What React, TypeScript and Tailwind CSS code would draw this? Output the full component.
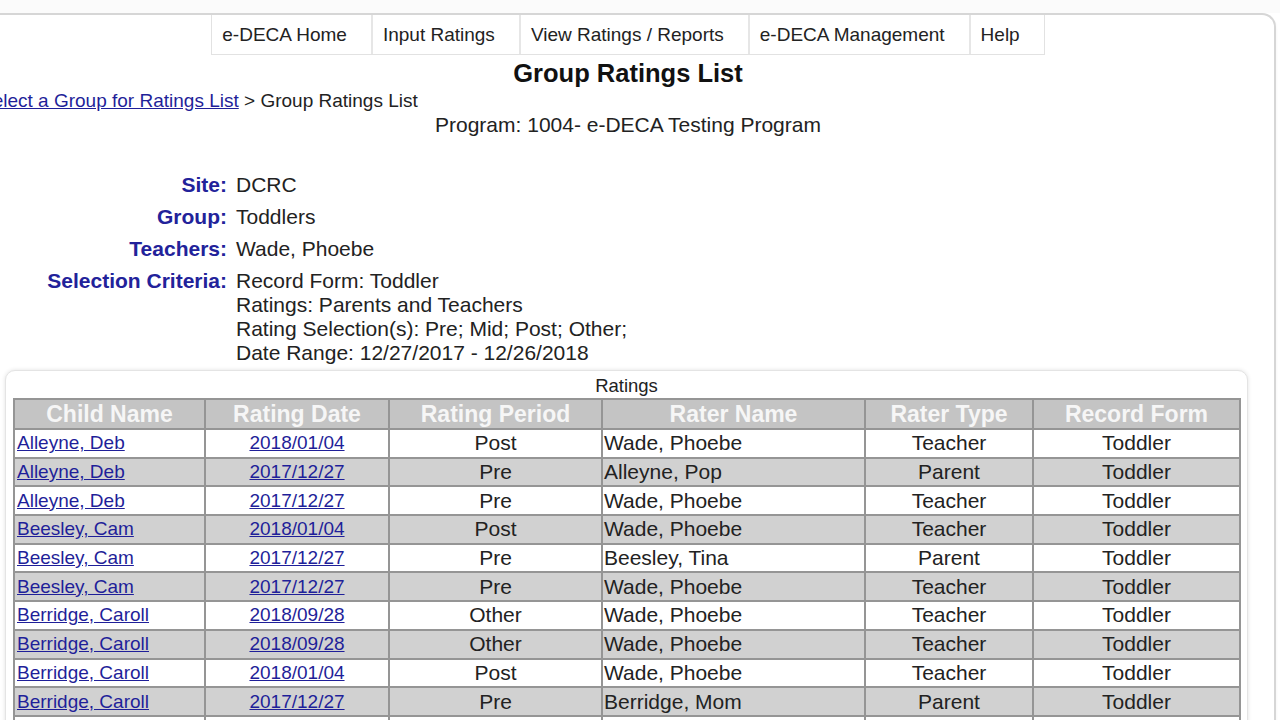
const navItems = ['e-DECA Home', 'Input Ratings', 'View Ratings / Reports', 'e-DECA Management', 'Help'];

const columns = ['Child Name', 'Rating Date', 'Rating Period', 'Rater Name', 'Rater Type', 'Record Form'];

const rows = [
  ['Alleyne, Deb', '2018/01/04', 'Post', 'Wade, Phoebe', 'Teacher', 'Toddler'],
  ['Alleyne, Deb', '2017/12/27', 'Pre', 'Alleyne, Pop', 'Parent', 'Toddler'],
  ['Alleyne, Deb', '2017/12/27', 'Pre', 'Wade, Phoebe', 'Teacher', 'Toddler'],
  ['Beesley, Cam', '2018/01/04', 'Post', 'Wade, Phoebe', 'Teacher', 'Toddler'],
  ['Beesley, Cam', '2017/12/27', 'Pre', 'Beesley, Tina', 'Parent', 'Toddler'],
  ['Beesley, Cam', '2017/12/27', 'Pre', 'Wade, Phoebe', 'Teacher', 'Toddler'],
  ['Berridge, Caroll', '2018/09/28', 'Other', 'Wade, Phoebe', 'Teacher', 'Toddler'],
  ['Berridge, Caroll', '2018/09/28', 'Other', 'Wade, Phoebe', 'Teacher', 'Toddler'],
  ['Berridge, Caroll', '2018/01/04', 'Post', 'Wade, Phoebe', 'Teacher', 'Toddler'],
  ['Berridge, Caroll', '2017/12/27', 'Pre', 'Berridge, Mom', 'Parent', 'Toddler'],
  ['Berridge, Caroll', '2017/12/27', 'Pre', 'Wade, Phoebe', 'Teacher', 'Toddler'],
];

const colWidths = ['w-[191px]', 'w-[184px]', 'w-[213px]', 'w-[263px]', 'w-[168px]', 'w-[207px]'];

function InfoRow({ label, children }: { label: string; children: React.ReactNode }) {
  return (
    <>
      <div className="text-right font-bold text-[#22229a]">{label}</div>
      <div>{children}</div>
    </>
  );
}

export default function App() {
  return (
    <div className="min-h-[720px] bg-white overflow-hidden text-[#222] font-['Liberation_Sans',Arial,sans-serif]">
      <div className="h-[13px] bg-[#fbfbfb]" />
      <div className="w-[1276px] border-t-[2px] border-r-[2px] border-[#d6d6d6] rounded-tr-[14px] shadow-[0_2px_3px_rgba(0,0,0,0.06)]">
        <div className="w-[1256px]">
          {/* Top navigation */}
          <div className="flex justify-center">
            <div className="flex h-[40px] border border-t-0 border-[#e2e2e2]">
              {navItems.map((item, i) => (
                <div
                  key={item}
                  className={`flex items-center pt-[2px] pl-[10px] pr-[24px] text-[19px] text-[#222] ${i > 0 ? 'border-l-2 border-[#e6e6e6]' : ''}`}
                >
                  {item}
                </div>
              ))}
            </div>
          </div>

          {/* Title */}
          <h1 className="mt-[2px] h-[32px] text-center text-[25.5px] font-bold leading-[32px] text-[#111]">
            Group Ratings List
          </h1>

          {/* Breadcrumb */}
          <div className="-ml-[20px] h-[24px] text-[19px] leading-[24px] text-[#222]">
            <a href="#" className="text-[#1f1f99] underline">Select a Group for Ratings List</a>
            {' > Group Ratings List'}
          </div>

          <div className="h-[24px] text-center text-[21px] leading-[24px]">
            Program: 1004- e-DECA Testing Program
          </div>

          {/* Info section */}
          <div className="mt-[36px] grid grid-cols-[227px_auto] gap-x-[9px] gap-y-[8px] text-[21px] leading-[24px]">
            <InfoRow label="Site:">DCRC</InfoRow>
            <InfoRow label="Group:">Toddlers</InfoRow>
            <InfoRow label="Teachers:">Wade, Phoebe</InfoRow>
            <InfoRow label="Selection Criteria:">
              <div>Record Form: Toddler</div>
              <div>Ratings: Parents and Teachers</div>
              <div>Rating Selection(s): Pre; Mid; Post; Other;</div>
              <div>Date Range: 12/27/2017 - 12/26/2018</div>
            </InfoRow>
          </div>

          {/* Ratings table */}
          <div className="ml-[5px] mt-[5px] w-[1243px] rounded-[10px] border border-[#e4e4e4] bg-white px-[7px] pt-[2px] pb-4 shadow-[0_0_4px_rgba(0,0,0,0.12)]">
            <div className="h-[25px] text-center text-[18.5px] leading-[25px]">Ratings</div>
            <table className="w-[1226px] table-fixed border-collapse text-[21px]">
              <thead>
                <tr className="h-[30px] bg-[#c4c4c4]">
                  {columns.map((c, i) => (
                    <th key={c} className={`${colWidths[i]} border-2 border-[#959595] p-0 text-center text-[23px] font-bold leading-[25px] text-[#f6f6f6]`}>
                      {c}
                    </th>
                  ))}
                </tr>
              </thead>
              <tbody>
                {rows.map((r, i) => (
                  <tr key={i} className={`h-[28.7px] ${i % 2 === 1 ? 'bg-[#d1d1d1]' : 'bg-white'}`}>
                    <td className="border-2 border-[#959595] px-[2px] py-0 text-[19px] leading-[24px]">
                      <a href="#" className="text-[#1f1f99] underline">{r[0]}</a>
                    </td>
                    <td className="border-2 border-[#959595] p-0 text-center text-[19px] leading-[24px]">
                      <a href="#" className="text-[#1f1f99] underline">{r[1]}</a>
                    </td>
                    <td className="border-2 border-[#959595] p-0 text-center leading-[24px]">{r[2]}</td>
                    <td className="border-2 border-[#959595] px-[1px] py-0 leading-[24px]">{r[3]}</td>
                    <td className="border-2 border-[#959595] p-0 text-center leading-[24px]">{r[4]}</td>
                    <td className="border-2 border-[#959595] p-0 text-center leading-[24px]">{r[5]}</td>
                  </tr>
                ))}
              </tbody>
            </table>
          </div>
        </div>
      </div>
    </div>
  );
}
